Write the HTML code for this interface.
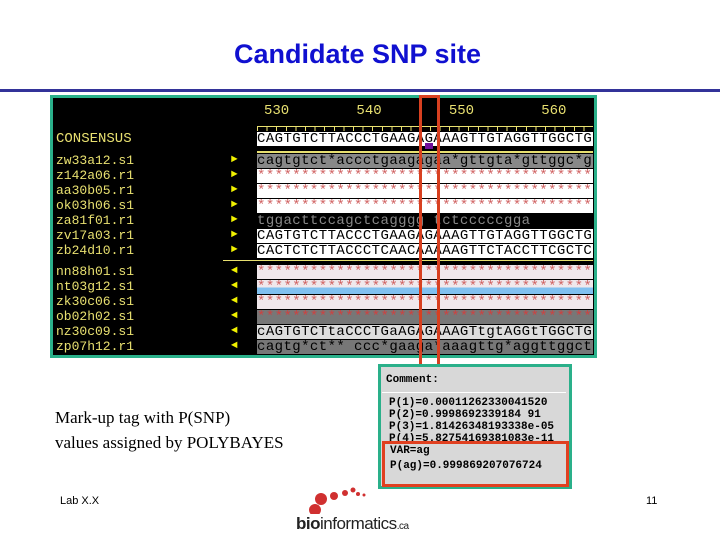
<!DOCTYPE html>
<html><head><meta charset="utf-8"><style>
body{margin:0;width:720px;height:540px;position:relative;background:#fff;overflow:hidden;font-family:"Liberation Sans",sans-serif}
.a{position:absolute}
.mono{font-family:"Liberation Mono",monospace;font-size:13px;white-space:pre;line-height:15px}
.name{color:#e8e070;left:56px}
.seq{left:257px;width:336px;height:14px;font-size:14px;letter-spacing:0.42px;overflow:hidden}
.arr{color:#f0f000;left:231px;font-size:11px}
</style></head><body>
<div class="a" style="left:0;top:39px;width:715px;text-align:center;color:#1010d0;font-weight:bold;font-size:27px">Candidate SNP site</div>
<div class="a" style="left:0;top:89px;width:720px;height:3px;background:#333399"></div>

<div class="a" style="left:50px;top:95px;width:541px;height:257px;border:3px solid #2ab08a;background:#000"></div>
<div class="a mono" style="left:264px;top:104px;color:#e8e070;font-size:14px">530        540        550        560</div>
<div class="a" style="left:257px;top:126px;width:336px;height:1px;background:#e8e070"></div>
<div class="a" style="left:257px;top:126px;width:336px;height:5px;background:repeating-linear-gradient(90deg,#e8e070 0 1px,transparent 1px 9.6px)"></div>
<div class="a mono name" style="top:132px;font-size:14px">CONSENSUS</div>
<div class="a mono seq" style="top:132px;background:#fff;color:#000">CAGTGTCTTACCCTGAAGAGAAAGTTGTAGGTTGGCTG</div>
<div class="a" style="left:425px;top:143px;width:8px;height:6px;background:#70109a"></div>
<div class="a" style="left:257px;top:151px;width:336px;height:2px;background:#e8e070"></div>

<div class="a mono name" style="top:153px">zw33a12.s1
z142a06.r1
aa30b05.r1
ok03h06.s1
za81f01.r1
zv17a03.r1
zb24d10.r1</div>
<div class="a mono arr" style="top:153px">►
►
►
►
►
►
►</div>
<div class="a mono seq" style="top:154px;background:#888;color:#000">cagtgtct*accctgaagagaa*gttgta*gttggc*g</div>
<div class="a mono seq" style="top:169px;background:#fff;color:#d06060">**************************************</div>
<div class="a mono seq" style="top:184px;background:#fff;color:#d06060">**************************************</div>
<div class="a mono seq" style="top:199px;background:#fff;color:#d06060">**************************************</div>
<div class="a mono seq" style="top:214px;color:#888">tggacttccagctcagggg tctcccccgga</div>
<div class="a mono seq" style="top:229px;background:#fff;color:#000">CAGTGTCTTACCCTGAAGAGAAAGTTGTAGGTTGGCTG</div>
<div class="a mono seq" style="top:244px;background:#fff;color:#000">CACTCTCTTACCCTCAACAAAAAGTTCTACCTTCGCTC</div>
<div class="a" style="left:223px;top:260px;width:370px;height:1px;background:#e8e070"></div>

<div class="a mono name" style="top:264px">nn88h01.s1
nt03g12.s1
zk30c06.s1
ob02h02.s1
nz30c09.s1
zp07h12.r1</div>
<div class="a mono arr" style="top:264px">◄
◄
◄
◄
◄
◄</div>
<div class="a mono seq" style="top:265px;background:#f0e8ec;color:#d06060">**************************************</div>
<div class="a mono seq" style="top:280px;background:linear-gradient(#f0e8ec 55%,#80c0f0 55%);color:#d06060">**************************************</div>
<div class="a mono seq" style="top:295px;background:#f0e8ec;color:#d06060">**************************************</div>
<div class="a mono seq" style="top:310px;background:#777;color:#d04040">**************************************</div>
<div class="a mono seq" style="top:325px;background:#ddd;color:#000">cAGTGTCTtaCCCTGaAGAGAAAGTtgtAGGtTGGCTG</div>
<div class="a mono seq" style="top:340px;background:#777;color:#000">cagtg*ct** ccc*gaaga*aaagttg*aggttggctg</div>

<div class="a" style="left:419px;top:95px;width:15px;height:270px;border:3px solid #d84020;border-bottom:none"></div>

<div class="a" style="left:378px;top:364px;width:188px;height:119px;border:3px solid #2ab08a;background:#d8d8d8"></div>
<div class="a" style="left:382px;top:392px;width:184px;height:1px;background:#fff"></div>
<div class="a mono" style="left:386px;top:373px;font-size:11px;color:#000;font-weight:bold">Comment:</div>
<div class="a mono" style="left:389px;top:397px;font-size:11px;line-height:12px;color:#000;font-weight:bold">P(1)=0.00011262330041520
P(2)=0.9998692339184 91
P(3)=1.81426348193338e-05
P(4)=5.82754169381083e-11</div>
<div class="a" style="left:382px;top:441px;width:181px;height:40px;border:3px solid #e04020;background:#d8d8d8"></div>
<div class="a mono" style="left:390px;top:444px;font-size:11px;line-height:15px;color:#000;font-weight:bold">VAR=ag
P(ag)=0.999869207076724</div>

<div class="a" style="left:55px;top:405px;font-family:'Liberation Serif',serif;font-size:17px;line-height:25px;color:#000">Mark-up tag with P(SNP)<br>values assigned by POLYBAYES</div>
<div class="a" style="left:60px;top:495px;font-size:11px">Lab X.X</div>
<div class="a" style="left:646px;top:495px;font-size:11px">11</div>

<svg class="a" style="left:300px;top:484px" width="80" height="30">
<circle cx="21" cy="15" r="6" fill="#d03030"/><circle cx="34" cy="12" r="4" fill="#d03030"/>
<circle cx="45" cy="9" r="3" fill="#d03030"/><circle cx="53" cy="6" r="2.5" fill="#d03030"/>
<circle cx="58" cy="10" r="2" fill="#d03030"/><circle cx="64" cy="11" r="1.5" fill="#d03030"/>
<circle cx="15" cy="26" r="6" fill="#d03030"/>
</svg>
<div class="a" style="left:296px;top:514px;font-size:17px;color:#222;letter-spacing:-0.5px"><b>bio</b>informatics<span style="font-size:10px">.ca</span></div>
</body></html>
